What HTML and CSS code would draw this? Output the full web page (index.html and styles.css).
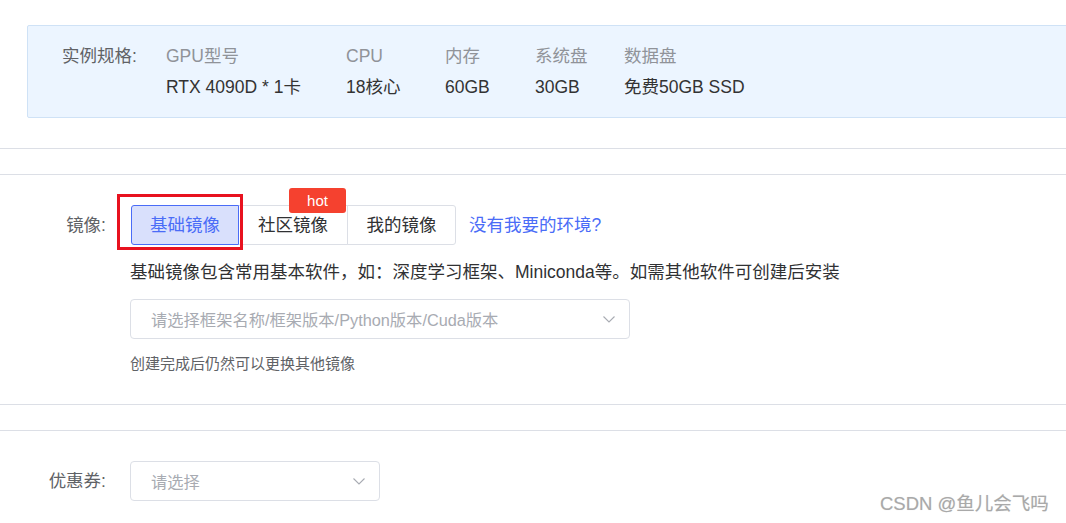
FILE: index.html
```html
<!DOCTYPE html>
<html lang="zh-CN">
<head>
<meta charset="utf-8">
<title>实例配置</title>
<link rel="stylesheet" href="styles.css">
</head>
<body>
<div class="page">
  <section class="spec-section">
    <div class="spec-box">
      <div class="spec-label">实例规格:</div>
      <div class="spec-col c1"><div class="spec-head">GPU型号</div><div class="spec-val">RTX 4090D * 1卡</div></div>
      <div class="spec-col c2"><div class="spec-head">CPU</div><div class="spec-val">18核心</div></div>
      <div class="spec-col c3"><div class="spec-head">内存</div><div class="spec-val">60GB</div></div>
      <div class="spec-col c4"><div class="spec-head">系统盘</div><div class="spec-val">30GB</div></div>
      <div class="spec-col c5"><div class="spec-head">数据盘</div><div class="spec-val">免费50GB SSD</div></div>
    </div>
  </section>

  <div class="divider"></div>

  <section class="form-section mirror">
    <div class="form-row">
      <div class="form-label">镜像:</div>
      <div class="form-body">
        <div class="seg-line">
          <div class="seg-group">
            <div class="seg-btn active">基础镜像</div>
            <div class="seg-btn mid">社区镜像<span class="hot">hot</span></div>
            <div class="seg-btn last">我的镜像</div>
            <div class="annot"></div>
          </div>
          <a class="link">没有我要的环境?</a>
        </div>
        <p class="desc">基础镜像包含常用基本软件，如：深度学习框架、Miniconda等。如需其他软件可创建后安装</p>
        <div class="select wide">
          <span class="placeholder">请选择框架名称/框架版本/Python版本/Cuda版本</span>
          <svg class="chev" width="12" height="7" viewBox="0 0 12 7"><polyline points="0.5,0.5 6,6 11.5,0.5" fill="none" stroke="#a8abb2" stroke-width="1.1"/></svg>
        </div>
        <p class="hint">创建完成后仍然可以更换其他镜像</p>
      </div>
    </div>
  </section>

  <div class="divider"></div>

  <section class="form-section coupon">
    <div class="form-row center">
      <div class="form-label">优惠券:</div>
      <div class="select narrow">
        <span class="placeholder">请选择</span>
        <svg class="chev" width="12" height="7" viewBox="0 0 12 7"><polyline points="0.5,0.5 6,6 11.5,0.5" fill="none" stroke="#a8abb2" stroke-width="1.1"/></svg>
      </div>
    </div>
  </section>

  <div class="watermark">CSDN @鱼儿会飞吗</div>
</div>
</body>
</html>
```

FILE: styles.css
```css
* { box-sizing: border-box; }
html, body {
  margin: 0;
  padding: 0;
  background: #fff;
  overflow: hidden;
}
body {
  font-family: "Liberation Sans", "Noto Sans CJK SC", sans-serif;
  font-size: 17.5px;
  color: #303133;
}
.page {
  position: relative;
  width: 1066px;
  height: 523px;
  overflow: hidden;
}

/* spec */
.spec-section {
  padding: 25px 0 0 27px;
}
.spec-box {
  display: flex;
  width: 1100px;
  height: 93px;
  background: #ecf5ff;
  border: 1px solid #cfe2f6;
  border-radius: 2px;
  padding: 18px 0 0 34px;
}
.spec-label {
  width: 104px;
  line-height: 24px;
  color: #606266;
}
.spec-col {
  display: flex;
  flex-direction: column;
  gap: 7px;
}
.c1 { width: 180px; }
.c2 { width: 99px; }
.c3 { width: 90px; }
.c4 { width: 89px; }
.spec-head {
  line-height: 24px;
  color: #909399;
}
.spec-val {
  line-height: 24px;
  color: #333;
}

.divider {
  height: 27px;
  border-top: 1px solid #dcdfe6;
  border-bottom: 1px solid #dcdfe6;
}
.spec-section + .divider { margin-top: 30px; }

.form-section {
  padding-top: 30px;
}
.mirror { padding-bottom: 30px; }
.form-row {
  display: flex;
  align-items: flex-start;
}
.form-label {
  width: 106px;
  margin-right: 24px;
  text-align: right;
  line-height: 40px;
  color: #606266;
}
.form-body {
  display: flex;
  flex-direction: column;
}
.seg-line {
  display: flex;
  align-items: center;
}
.seg-group {
  position: relative;
  display: flex;
  margin-left: 1px;
}
.seg-btn {
  position: relative;
  height: 40px;
  line-height: 38px;
  width: 109px;
  text-align: center;
  border: 1px solid #dcdfe6;
  color: #303133;
  background: #fff;
}
.seg-btn.active {
  width: 108px;
  background: #d9e0fc;
  border-color: #4a6cf7;
  color: #4a6cf7;
  border-radius: 3px 0 0 3px;
  z-index: 1;
}
.seg-btn.mid { border-left: none; }
.seg-btn.last { margin-left: -1px; border-radius: 0 3px 3px 0; }
.hot {
  position: absolute;
  top: -18px;
  left: 50px;
  width: 57px;
  height: 25px;
  line-height: 25px;
  background: #f5412f;
  color: #fff;
  font-size: 15px;
  border-radius: 3px;
  text-align: center;
}
.annot {
  position: absolute;
  left: -14px;
  top: -11px;
  width: 126px;
  height: 56px;
  border: 3px solid #e8121f;
  z-index: 2;
}
.link {
  margin-left: 13px;
  color: #4a6cf7;
  line-height: 24px;
  text-decoration: none;
}
.desc {
  margin: 15px 0 0;
  line-height: 24px;
  color: #303133;
  white-space: nowrap;
}
.select {
  position: relative;
  height: 40px;
  border: 1px solid #dcdfe6;
  border-radius: 4px;
  display: flex;
  align-items: center;
  padding-left: 20px;
  background: #fff;
}
.select.wide { width: 500px; margin-top: 15px; }
.select.narrow { width: 250px; }
.placeholder {
  color: #a8abb2;
  font-size: 16.3px;
}
.chev {
  position: absolute;
  right: 14px;
  top: 16px;
}
.hint {
  margin: 15px 0 0;
  font-size: 15px;
  line-height: 20px;
  color: #606266;
}
.watermark {
  position: absolute;
  left: 880px;
  top: 492px;
  font-size: 18.5px;
  line-height: 24px;
  color: #a9a9a9;
  text-shadow: 0 0 1px rgba(0,0,0,0.15);
}
```
